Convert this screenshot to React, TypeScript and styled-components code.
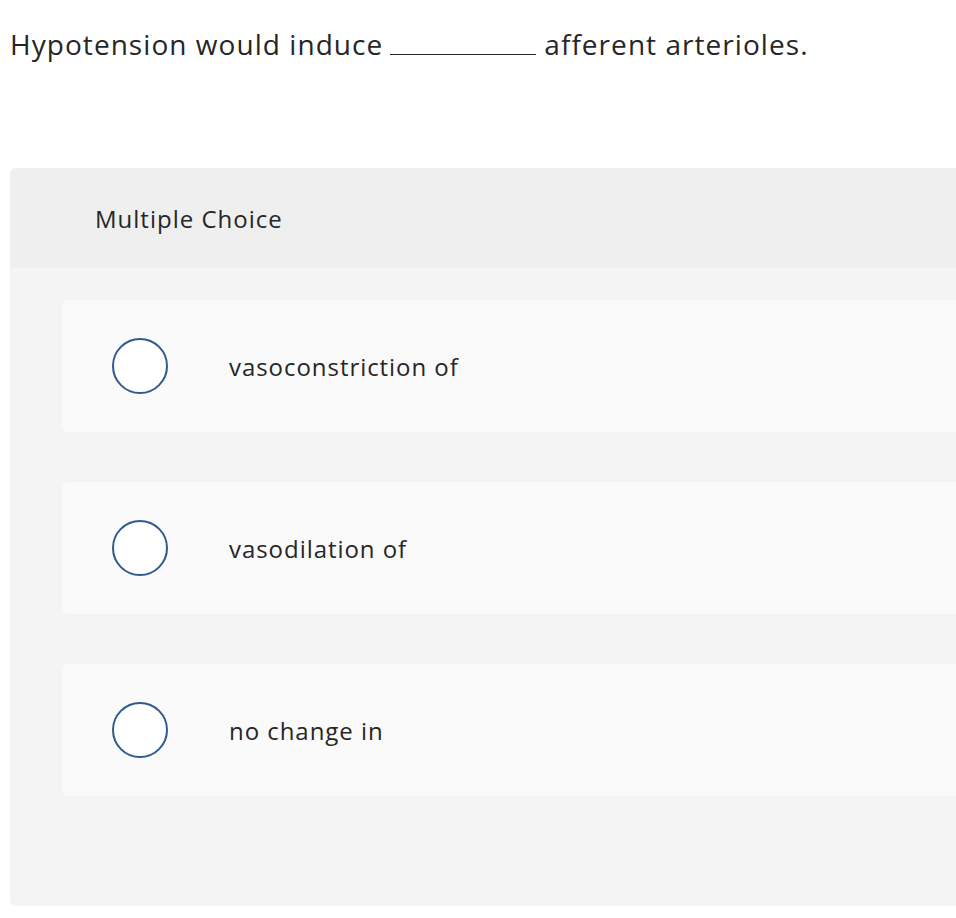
import styled, { createGlobalStyle } from "styled-components";

const GlobalStyle = createGlobalStyle`
  html, body {
    margin: 0;
    padding: 0;
    background: #ffffff;
    overflow: hidden;
  }
  body {
    font-family: "Open Sans", "Liberation Sans", sans-serif;
    color: #262626;
  }
`;

const Page = styled.div`
  width: 956px;
  height: 918px;
  overflow: hidden;
  padding: 22px 0 0 10px;
  box-sizing: border-box;
`;

const Question = styled.p`
  margin: 0;
  font-size: 28px;
  line-height: 44px;
  letter-spacing: 1.05px;
  color: #262626;
  white-space: nowrap;
`;

const Blank = styled.span`
  display: inline-block;
  width: 146px;
  height: 30px;
  margin: 0 8px 0 7px;
  border-bottom: 1.5px solid #262626;
  vertical-align: baseline;
`;

const Panel = styled.section`
  margin-top: 102px;
  width: 1000px;
  border-radius: 6px 0 0 6px;
  overflow: hidden;
  background: #f4f4f4;
`;

const PanelHeader = styled.div`
  height: 100px;
  display: flex;
  align-items: center;
  padding-left: 85px;
  background: #efefef;
  font-size: 24px;
  letter-spacing: 1px;
  color: #262626;
`;

const Options = styled.div`
  display: flex;
  flex-direction: column;
  gap: 50px;
  padding: 32px 0 110px 52px;
`;

const Option = styled.label`
  height: 132px;
  display: flex;
  align-items: center;
  padding-left: 50px;
  border-radius: 6px 0 0 6px;
  background: #fafafa;
  cursor: pointer;
`;

const Radio = styled.span`
  width: 52px;
  height: 52px;
  flex: none;
  border-radius: 50%;
  border: 2px solid #2e5b8e;
  background: #ffffff;
`;

const OptionText = styled.span`
  margin-left: 61px;
  font-size: 24px;
  letter-spacing: 0.95px;
  color: #262626;
`;

const choices = ["vasoconstriction of", "vasodilation of", "no change in"];

export default function App() {
  return (
    <>
      <GlobalStyle />
      <Page>
        <Question>
          Hypotension would induce<Blank />afferent arterioles.
        </Question>
        <Panel>
          <PanelHeader>Multiple Choice</PanelHeader>
          <Options>
            {choices.map((c) => (
              <Option key={c}>
                <Radio />
                <OptionText>{c}</OptionText>
              </Option>
            ))}
          </Options>
        </Panel>
      </Page>
    </>
  );
}
